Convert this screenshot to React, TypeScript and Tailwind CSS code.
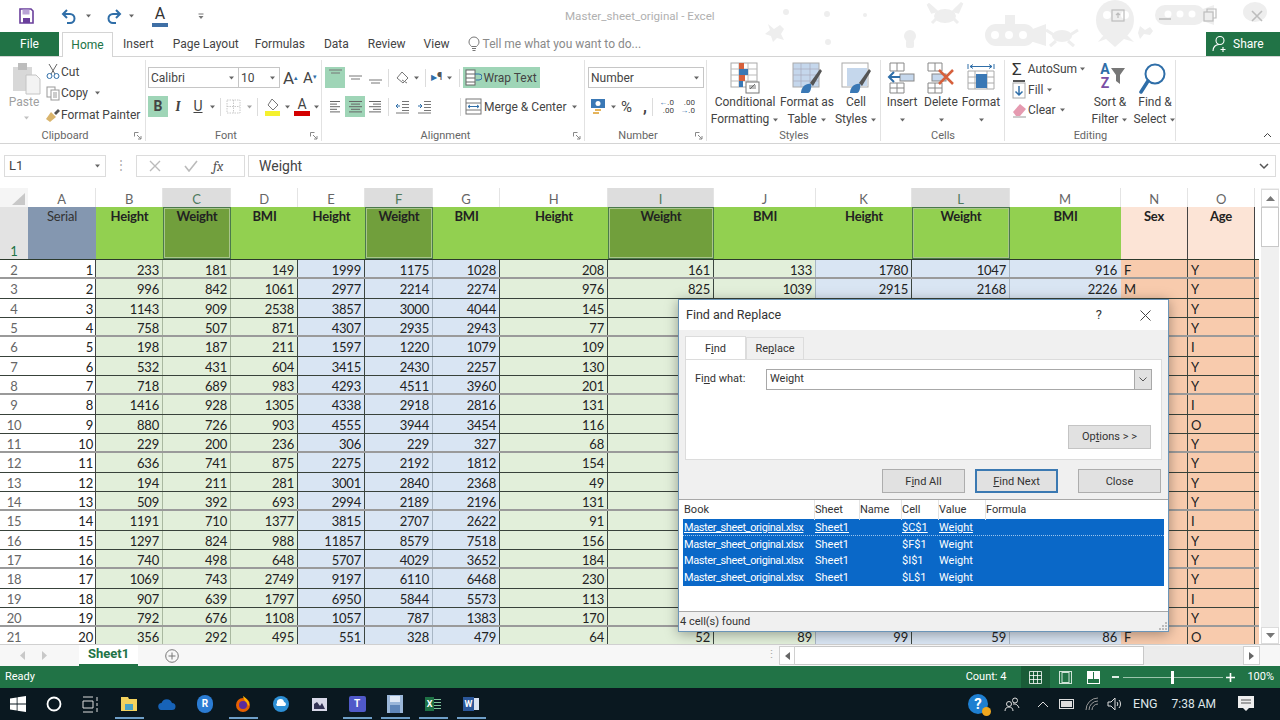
import React from "react";

const ROW = "grid grid-rows-[minmax(0,1fr)] grid-cols-[28px_68px_67px_68px_67px_67px_68px_67px_108px_106px_102px_96px_98px_111px_67px_67px_4px]";
const LETTERS = ["A","B","C","D","E","F","G","H","I","J","K","L","M","N","O"];
const HEAD = ["Serial","Height","Weight","BMI","Height","Weight","BMI","Height","Weight","BMI","Height","Weight","BMI","Sex","Age"];
const DATA: (string)[][] = [
"233,181,149,1999,1175,1028,208,161,133,1780,1047,916,F,Y","996,842,1061,2977,2214,2274,976,825,1039,2915,2168,2226,M,Y",
"1143,909,2538,3857,3000,4044,145,,,,,,,Y","758,507,871,4307,2935,2943,77,,,,,,,Y","198,187,211,1597,1220,1079,109,,,,,,,I",
"532,431,604,3415,2430,2257,130,,,,,,,Y","718,689,983,4293,4511,3960,201,,,,,,,Y","1416,928,1305,4338,2918,2816,131,,,,,,,I",
"880,726,903,4555,3944,3454,116,,,,,,,O","229,200,236,306,229,327,68,,,,,,,Y","636,741,875,2275,2192,1812,154,,,,,,,Y",
"194,211,281,3001,2840,2368,49,,,,,,,Y","509,392,693,2994,2189,2196,131,,,,,,,Y","1191,710,1377,3815,2707,2622,91,,,,,,,I",
"1297,824,988,11857,8579,7518,156,,,,,,,Y","740,498,648,5707,4029,3652,184,,,,,,,Y","1069,743,2749,9197,6110,6468,230,,,,,,,Y",
"907,639,1797,6950,5844,5573,113,,,,,,,I","792,676,1108,1057,787,1383,170,,,,,,,Y","356,292,495,551,328,479,64,52,89,99,59,86,F,O",
].map((s) => s.split(","));

const bodyBg = (c: number) => c <= 2 ? "bg-[#e2efda]" : c <= 5 ? "bg-[#d9e5f3]" : c <= 8 ? "bg-[#e2efda]" : c <= 11 ? "bg-[#d9e5f3]" : "bg-[#f8cbad]";
const bodyLine = (c: number) => (c === 0 || c === 1 ? "border-[#a9b8a0]" : c === 4 || c === 8 || c === 10 ? "border-[#a8b6c4]" : c === 11 ? "border-[#d9e5f3]" : "border-[#3c4640]");

function Caret({ className = "" }: { className?: string }) {
  return <svg width="7" height="4" viewBox="0 0 7 4" className={"inline-block shrink-0 " + className}><path d="M1 0.5h5L3.5 3.5z" fill="#666" /></svg>;
}

function Group({ w, label, launcher, children }: { w: string; label: string; launcher?: boolean; children: React.ReactNode }) {
  return (
    <div className={"relative h-[86px] flex flex-col shrink-0 " + w}>
      <div className="h-[69px] shrink-0 flex">{children}</div>
      <div className={"h-[18px] shrink-0 text-center text-[11px] leading-[20px] text-[#666] " + (launcher ? "pr-[16px]" : "")}>{label}</div>
      <span className="absolute right-0 top-[3px] h-[81px] w-px bg-[#e2e2e2]" />
      {launcher && (
        <svg width="8" height="8" viewBox="0 0 8 8" className="absolute right-[4px] bottom-[3px]"><path d="M0.5 0.5h4M0.5 0.5v4M3 3l4 4M7 4v3H4" stroke="#888" fill="none" /></svg>
      )}
    </div>
  );
}

function Sep() { return <span className="block w-px h-[18px] bg-[#dcdcdc] shrink-0" />; }

function AlignIcon({ kind }: { kind: "l" | "c" | "r" }) {
  const ws = kind === "l" ? [[2,12],[2,9],[2,12],[2,9],[2,12]] : kind === "c" ? [[1,14],[3,12],[1,14],[3,12],[1,14]] : [[1,13],[5,13],[1,13],[5,13],[1,13]];
  return <svg width="15" height="15" viewBox="0 0 15 15">{ws.map((p, i) => <path key={i} d={`M${p[0]} ${2.5 + i * 2.6}H${p[1]}`} stroke="#666" />)}</svg>;
}

function VAlign({ y }: { y: number }) {
  return <svg width="15" height="15" viewBox="0 0 15 15"><path d={`M1 ${y}H14M3 ${y + 3}H12`} stroke="#777" /></svg>;
}

function Large({ w, ml, icon, l1, l2 }: { w: string; ml?: string; icon: React.ReactNode; l1: string; l2?: React.ReactNode }) {
  return (
    <div className={"flex flex-col items-center shrink-0 whitespace-nowrap " + w + " " + (ml || "")}>
      <div className="h-[36px] shrink-0 pt-[5px] flex items-start justify-center">{icon}</div>
      <div className="h-[17px] shrink-0 leading-[17px] mt-[1px]">{l1}</div>
      <div className="h-[17px] shrink-0 leading-[17px] flex items-center gap-[3px]">{l2}</div>
    </div>
  );
}

function TitleBar() {
  return (
    <div className="relative h-[32px] flex items-center">
      <svg width="15" height="16" viewBox="0 0 15 16" className="ml-[19px]"><path d="M1 1h11l2 2v12H1z" fill="none" stroke="#6a3f9c" strokeWidth="1.6" /><rect x="3.5" y="1.5" width="7" height="5" fill="#b9a3d6" /><rect x="4" y="10" width="7" height="5" fill="#6a3f9c" /></svg>
      <svg width="16" height="16" viewBox="0 0 16 16" className="ml-[27px]"><path d="M6 2L2 6l4 4" fill="none" stroke="#2f6ea8" strokeWidth="2" /><path d="M2 6h7a4.5 4.5 0 0 1 0 9H6" fill="none" stroke="#2f6ea8" strokeWidth="2" /></svg>
      <Caret className="ml-[8px]" />
      <svg width="16" height="16" viewBox="0 0 16 16" className="ml-[14px]"><path d="M10 2l4 4-4 4" fill="none" stroke="#2f6ea8" strokeWidth="2" /><path d="M14 6H7a4.5 4.5 0 0 0 0 9h3" fill="none" stroke="#2f6ea8" strokeWidth="2" /></svg>
      <Caret className="ml-[6px]" />
      <div className="ml-[17px] w-[16px] h-[22px] flex flex-col items-center text-[16px] leading-[18px] text-[#333]"><span>A</span><span className="w-[16px] h-[4px] bg-[#3f6fa5]" /></div>
      <svg width="6" height="7" viewBox="0 0 6 7" className="ml-[30px]"><path d="M0.5 1h5" stroke="#777" /><path d="M0.5 3h5L3 6z" fill="#777" /></svg>
      <div className="ml-[361px] mt-[1px] text-[11.6px] text-[#b0b0b0]">Master_sheet_original - Excel</div>
      <svg width="540" height="56" viewBox="0 0 540 56" className="absolute left-[740px] top-0" fill="#eeeeee">
        <path d="M28 24l6 5 6-4 4 4-3 5 3 6-7-2-4 4-2-6-6-2 5-4z" />
        <circle cx="46" cy="12" r="3" /><circle cx="87" cy="14" r="3" /><circle cx="125" cy="15" r="2" /><circle cx="88" cy="42" r="3" />
        <g><circle cx="170" cy="36" r="6" /><rect x="166" y="40" width="8" height="8" rx="2" /></g>
        <ellipse cx="205" cy="16" rx="11" ry="7" /><path d="M188 4l8 7-4 1zM222 3l-8 8 4 1zM192 23l6-6M218 23l-6-6" stroke="#eeeeee" strokeWidth="3" />
        <rect x="245" y="24" width="50" height="22" rx="11" /><rect x="265" y="15" width="10" height="12" /><path d="M290 30l16-6v22l-16-5z" />
        <circle cx="255" cy="35" r="4" fill="#fff" /><circle cx="269" cy="35" r="4" fill="#fff" /><circle cx="283" cy="35" r="4" fill="#fff" />
        <ellipse cx="322" cy="36" rx="10" ry="6" /><path d="M306 30l8 5M338 30l-8 5M310 46l6-5M334 46l-6-5" stroke="#eeeeee" strokeWidth="3" />
        <ellipse cx="375" cy="20" rx="19" ry="20" /><path d="M358 42l10-12 7 6 7-6 12 12-10-3-9 8-9-8z" />
        <circle cx="367" cy="15" r="4" fill="#fff" /><circle cx="385" cy="15" r="4" fill="#fff" />
        <rect x="415" y="5" width="50" height="20" rx="10" /><path d="M460 10l14-5v20l-14-5z" />
        <circle cx="428" cy="14" r="3.5" fill="#fff" /><circle cx="440" cy="14" r="3.5" fill="#fff" /><circle cx="452" cy="14" r="3.5" fill="#fff" />
        <path d="M400 26l5 4 5-3 3 4-3 4-6-1-4 5-2-6z" />
        <ellipse cx="515" cy="12" rx="12" ry="10" /><circle cx="490" cy="36" r="4" /><circle cx="525" cy="42" r="9" />
      </svg>
      <svg width="160" height="20" viewBox="0 0 160 20" className="absolute left-[1108px] top-[6px]" fill="none" stroke="#bdbdbd" strokeWidth="1.2">
        <rect x="4" y="4" width="12" height="11" /><path d="M10 12V7M8 9l2-2 2 2" />
        <path d="M51 13h12" strokeWidth="1.6" />
        <rect x="96" y="6" width="9" height="9" /><path d="M99 6V3h9v9h-3" />
        <path d="M144 5l10 10M154 5l-10 10" strokeWidth="1.6" />
      </svg>
    </div>
  );
}

function TabsRow() {
  const tabs = [["Insert", "ml-[10px]"], ["Page Layout", "ml-[19px]"], ["Formulas", "ml-[16px]"], ["Data", "ml-[19px]"], ["Review", "ml-[19px]"], ["View", "ml-[18px]"]];
  return (
    <div className="relative z-10 h-[24px] flex items-center text-[12px] text-[#444]">
      <div className="w-[59px] h-[24px] bg-[#217346] text-white text-center leading-[24px]">File</div>
      <div className="ml-[3px] w-[51px] h-[25px] -mb-px bg-white border border-b-0 border-[#d4d4d4] text-[#217346] text-center leading-[24px]">Home</div>
      {tabs.map(([t, m]) => <div key={t} className={m}>{t}</div>)}
      <svg width="12" height="16" viewBox="0 0 12 16" className="ml-[18px]" fill="none" stroke="#777"><path d="M3.5 10.5C2 9 1 7.8 1 6a5 5 0 0 1 10 0c0 1.8-1 3-2.500 4.500zM4 12.500h4M4.500 14.500h3" /></svg>
      <div className="ml-[3px] text-[#8a8a8a] whitespace-nowrap">Tell me what you want to do...</div>
      <div className="absolute right-0 top-0 w-[74px] h-[24px] bg-[#217346] text-white flex items-center">
        <svg width="16" height="18" viewBox="0 0 16 18" className="ml-[6px]" fill="none" stroke="#fff" strokeWidth="1.1"><circle cx="8" cy="5.500" r="4" /><path d="M1 16c0-4 2.500-6.500 6-6.500M11 12v5M8.500 14.500h5" /></svg>
        <span className="ml-[5px]">Share</span>
      </div>
    </div>
  );
}

function Clipboard() {
  return (
    <Group w="w-[146px]" label="Clipboard" launcher>
      <div className="w-[44px] pl-[8px] flex flex-col items-center text-[#a0a0a0]">
        <svg width="30" height="33" viewBox="0 0 30 33" className="mt-[5px] shrink-0"><rect x="2" y="5" width="19" height="24" fill="#d8d8d8" /><rect x="7" y="1" width="9" height="7" fill="#bdbdbd" /><path d="M15 13h10l4 4v15H15z" fill="#f3f3f3" stroke="#c4c4c4" /></svg>
        <div className="mt-[-1px] h-[17px] leading-[17px] text-[12px] ml-[-4px] w-[44px] text-center">Paste</div>
        <Caret className="mt-[5px] opacity-40" />
      </div>
      <div className="flex flex-col mt-[4px]">
        {[["Cut", 0], ["Copy", 1], ["Format Painter", 2]].map(([t, i]) => (
          <div key={t as string} className="h-[21.500px] flex items-center whitespace-nowrap text-[12px] text-[#444]">
            <span className="w-[17px] flex justify-center">
              {i === 0 && <svg width="14" height="17" viewBox="0 0 14 17" fill="none" stroke="#2f6ea8"><path d="M3 1l6 10M11 1L5 11" stroke="#666" /><circle cx="3.500" cy="13" r="2.500" /><circle cx="10.500" cy="13" r="2.500" /></svg>}
              {i === 1 && <svg width="14" height="15" viewBox="0 0 14 15" fill="#fff" stroke="#999"><rect x="1" y="1" width="8" height="10" /><rect x="5" y="4" width="8" height="10" /><path d="M7 7h4M7 9h4M7 11h4" /></svg>}
              {i === 2 && <svg width="16" height="16" viewBox="0 0 16 16"><path d="M1 12l5-7 5 5-6 5z" fill="#d9b46c" /><path d="M9 6l4-4 2 2-4 4z" fill="#555" /></svg>}
            </span>
            {t}
            {i === 1 && <Caret className="ml-[6px]" />}
          </div>
        ))}
      </div>
    </Group>
  );
}

function Font() {
  return (
    <Group w="w-[176px]" label="Font" launcher>
      <div className="pl-[2px] pt-[10px] flex flex-col gap-[8px] text-[12px] text-[#444]">
        <div className="flex items-center h-[21px]">
          <div className="w-[91px] h-[21px] border border-[#c6c6c6] flex items-center justify-between px-[2px]"><span>Calibri</span><Caret className="mr-[1px]" /></div>
          <div className="w-[41px] h-[21px] border border-l-0 border-[#c6c6c6] flex items-center justify-between px-[2px]"><span>10</span><Caret className="mr-[1px]" /></div>
          <span className="ml-[3px] text-[17px] w-[20px] leading-[16px]">A<sup className="text-[7px] text-[#2f6ea8]">▴</sup></span>
          <span className="text-[15px] w-[20px] leading-[16px]">A<sup className="text-[7px] text-[#2f6ea8]">▾</sup></span>
        </div>
        <div className="flex items-center h-[21px]">
          <span className="w-[20px] h-[21px] bg-[#9fd5b7] text-center font-bold text-[14px] leading-[21px]">B</span>
          <span className="w-[20px] text-center italic font-bold text-[14px] font-serif">I</span>
          <span className="w-[20px] text-center underline text-[14px]">U</span>
          <Caret className="ml-[1px]" />
          <span className="ml-[4px]"><Sep /></span>
          <svg width="15" height="15" viewBox="0 0 15 15" fill="none" stroke="#c8c8c8" className="ml-[5px]"><path d="M1 1h13v13H1zM1 7.500h13M7.500 1v13" strokeDasharray="1.500 1" /></svg>
          <Caret className="ml-[5px] opacity-60" />
          <span className="ml-[4px]"><Sep /></span>
          <svg width="17" height="18" viewBox="0 0 17 18" className="ml-[6px]"><path d="M8 1l6 6-5 5-5-5z" fill="none" stroke="#777" /><rect x="1" y="13" width="15" height="5" fill="#f5f12e" /></svg>
          <Caret className="ml-[3px]" />
          <div className="ml-[3px] w-[16px] h-[19px] flex flex-col items-center text-[14px] leading-[14px]"><span>A</span><span className="w-[16px] h-[5px] bg-[#d40000]" /></div>
          <Caret className="ml-[3px]" />
        </div>
      </div>
    </Group>
  );
}

function Alignment() {
  return (
    <Group w="w-[263px]" label="Alignment" launcher>
      <div className="pl-[3px] pt-[10px] flex flex-col gap-[8px] text-[12px] text-[#444]">
        <div className="flex items-center h-[21px]">
          <span className="w-[20px] h-[21px] bg-[#9fd5b7] flex justify-center pt-[1px]"><VAlign y={2} /></span>
          <span className="w-[20px] ml-0 flex justify-center"><VAlign y={6} /></span>
          <span className="w-[20px] flex justify-center"><VAlign y={10} /></span>
          <span className="ml-[3px]"><Sep /></span>
          <svg width="15" height="15" viewBox="0 0 15 15" className="ml-[6px]" fill="none" stroke="#777"><path d="M2 8l5-6 6 6-5 5zM7 10l5 3" /></svg>
          <Caret className="ml-[3px]" />
          <span className="ml-[5px]"><Sep /></span>
          <span className="ml-[5px] text-[11px] leading-[14px] text-[#555]"><span className="text-[#2f6ea8] text-[8px]">▶</span>¶</span>
          <Caret className="ml-[4px]" />
          <span className="ml-[6px]"><Sep /></span>
          <div className="ml-[3px] w-[77px] h-[21px] bg-[#9fd5b7] flex items-center">
            <svg width="17" height="17" viewBox="0 0 17 17" className="ml-[2px]" fill="#fff" stroke="#666"><rect x="1" y="1" width="9" height="15" /><path d="M1 5h9M1 9h9M1 13h9" /><path d="M10 5h4a2 2 0 0 1 0 6h-3" fill="none" stroke="#2f6ea8" /></svg>
            <span className="ml-[1px] whitespace-nowrap">Wrap Text</span>
          </div>
        </div>
        <div className="flex items-center h-[21px]">
          <span className="w-[20px] flex justify-center"><AlignIcon kind="l" /></span>
          <span className="w-[20px] h-[21px] bg-[#9fd5b7] flex items-center justify-center"><AlignIcon kind="c" /></span>
          <span className="w-[20px] flex justify-center"><AlignIcon kind="r" /></span>
          <span className="ml-[3px]"><Sep /></span>
          <svg width="15" height="15" viewBox="0 0 15 15" className="ml-[6px]" fill="none" stroke="#777"><path d="M7 2.500h7M7 5.500h7M7 8.500h7M7 11.500h7M1 14h13" /><path d="M5 7H1M3 5L1 7l2 2" stroke="#2f6ea8" /></svg>
          <svg width="15" height="15" viewBox="0 0 15 15" className="ml-[7px]" fill="none" stroke="#777"><path d="M7 2.500h7M7 5.500h7M7 8.500h7M7 11.500h7M1 14h13" /><path d="M1 7h4M3 5l2 2-2 2" stroke="#2f6ea8" /></svg>
          <span className="ml-[28px]"><Sep /></span>
          <svg width="17" height="17" viewBox="0 0 17 17" className="ml-[4px]" fill="none" stroke="#777"><rect x="1" y="1" width="15" height="15" /><path d="M1 5h15M1 12h15" /><path d="M3 8.500h11M3 8.500l2-1.500M3 8.500l2 1.500M14 8.500l-2-1.500M14 8.500l-2 1.500" stroke="#2f6ea8" /></svg>
          <span className="ml-[2px] whitespace-nowrap">Merge &amp; Center</span>
          <Caret className="ml-[5px]" />
        </div>
      </div>
    </Group>
  );
}

function NumberG() {
  return (
    <Group w="w-[122px]" label="Number" launcher>
      <div className="pl-[3px] pt-[10px] flex flex-col gap-[8px] text-[12px] text-[#444]">
        <div className="w-[116px] h-[21px] border border-[#c6c6c6] flex items-center justify-between px-[2px]"><span>Number</span><Caret className="mr-[1px]" /></div>
        <div className="flex items-center h-[21px]">
          <svg width="16" height="17" viewBox="0 0 16 17" className="ml-[2px]"><rect x="1" y="1" width="14" height="9" fill="#3a78b5" /><circle cx="8" cy="5.500" r="2.500" fill="#fff" /><rect x="5" y="11" width="6" height="2" fill="#e5b45c" /><rect x="3" y="14" width="6" height="2" fill="#e5b45c" /></svg>
          <Caret className="ml-[4px]" />
          <span className="ml-[4px] text-[15px] leading-[16px]">%</span>
          <span className="ml-[11px] font-bold text-[16px] leading-[12px]">,</span>
          <span className="ml-[5px]"><Sep /></span>
          <div className="ml-[4px] w-[17px] text-[8px] leading-[8px] text-right"><span className="text-[#2f6ea8]">←</span>.0<br />.00</div>
          <div className="ml-[4px] w-[17px] text-[8px] leading-[8px] text-right">.00<br /><span className="text-[#2f6ea8]">→</span>.0</div>
        </div>
      </div>
    </Group>
  );
}

function Styles() {
  return (
    <Group w="w-[174px]" label="Styles">
      <div className="flex text-[12px] text-[#444]">
        <Large ml="ml-[3px]" w="w-[70px]" l1="Conditional" l2={<>Formatting <Caret /></>} icon={
          <svg width="30" height="32" viewBox="0 0 30 32"><rect x="1" y="1" width="26" height="24" fill="#fff" stroke="#aaa" /><path d="M9 1v24M18 1v24M1 7h26M1 13h26M1 19h26" stroke="#bbb" /><rect x="9" y="1" width="5" height="6" fill="#d6603c" /><rect x="9" y="7" width="9" height="6" fill="#3a78b5" /><rect x="9" y="13" width="6" height="6" fill="#d6603c" /><rect x="9" y="19" width="4" height="6" fill="#3a78b5" /><rect x="16" y="20" width="13" height="11" fill="#fff" stroke="#777" /><path d="M20 27l5-5M19 24h7M19 26h7" stroke="#555" strokeWidth=".8" /></svg>} />
        <Large w="w-[54px]" l1="Format as" l2={<>Table <Caret /></>} icon={
          <svg width="32" height="32" viewBox="0 0 32 32"><rect x="2" y="1" width="26" height="24" fill="#c5d7ec" stroke="#aaa" /><path d="M2 7h26M2 13h26M2 19h26M10 1v24M19 1v24" stroke="#aab" strokeWidth=".7" /><path d="M22 24l9-15-2-2-10 14z" fill="#555" /><path d="M10 31c0-6 5-10 10-9 1 4-1 9-3 9z" fill="#3a78b5" /></svg>} />
        <Large w="w-[44px]" l1="Cell" l2={<>Styles <Caret /></>} icon={
          <svg width="32" height="32" viewBox="0 0 32 32"><rect x="2" y="1" width="26" height="24" fill="#fff" stroke="#aaa" /><rect x="7" y="6" width="20" height="18" fill="#c5d7ec" /><path d="M22 24l9-15-2-2-10 14z" fill="#555" /><path d="M10 31c0-6 5-10 10-9 1 4-1 9-3 9z" fill="#3a78b5" /></svg>} />
      </div>
    </Group>
  );
}

function Cells() {
  return (
    <Group w="w-[124px]" label="Cells">
      <div className="flex text-[12px] text-[#444]">
        <Large ml="ml-[3px]" w="w-[36px]" l1="Insert" l2={<Caret />} icon={
          <svg width="30" height="32" viewBox="0 0 30 32" fill="none"><path d="M3 1h14v8H3zM10 1v8M3 21h14v10H3zM3 26h14M10 21v10" stroke="#888" /><rect x="13" y="12" width="14" height="7" fill="#c5d7ec" stroke="#888" /><path d="M13 15H2M7 10l-5 5 5 5" stroke="#2f6ea8" strokeWidth="2" /></svg>} />
        <Large w="w-[42px]" l1="Delete" l2={<Caret />} icon={
          <svg width="32" height="32" viewBox="0 0 32 32" fill="none"><path d="M3 1h14v8H3zM10 1v8M3 21h14v10H3zM3 26h14M10 21v10" stroke="#888" /><rect x="7" y="12" width="14" height="7" fill="#c5d7ec" stroke="#888" /><path d="M14 8l14 14M28 8L14 22" stroke="#d6603c" strokeWidth="2.500" /></svg>} />
        <Large w="w-[38px]" l1="Format" l2={<Caret />} icon={
          <svg width="30" height="32" viewBox="0 0 30 32" fill="none"><path d="M2 2v5M28 2v5M4 4.500h22M4 4.500l3-2M4 4.500l3 2M26 4.500l-3-2M26 4.500l-3 2" stroke="#2f6ea8" /><path d="M2 9h26v18H2zM2 15h26M2 21h26M9 9v18M21 9v18" stroke="#aaa" /><rect x="10" y="12" width="11" height="14" fill="#3a78b5" /></svg>} />
      </div>
    </Group>
  );
}

function Editing() {
  return (
    <Group w="w-[171px]" label="Editing">
      <div className="flex text-[12px] text-[#444]">
        <div className="ml-[7px] w-[74px] mt-[2px] flex flex-col whitespace-nowrap">
          <div className="h-[20.500px] flex items-center"><span className="w-[17px] text-[17px] leading-[17px] text-[#333]">Σ</span><span className="ml-[6px] mr-[-4px]">AutoSum</span><Caret className="ml-[6px]" /></div>
          <div className="h-[20.500px] flex items-center">
            <svg width="14" height="19" viewBox="0 0 14 19" fill="none"><path d="M1 1h12" stroke="#555" strokeWidth="2" /><rect x="1" y="3" width="12" height="15" stroke="#aaa" /><path d="M7 6v9M3.500 11.500L7 15l3.500-3.500" stroke="#2f6ea8" strokeWidth="1.500" /></svg>
            <span className="ml-[2px]">Fill</span><Caret className="ml-[3px]" />
          </div>
          <div className="h-[20.500px] flex items-center">
            <svg width="15" height="16" viewBox="0 0 15 16"><path d="M1 10l7-8 6 5-6 7H4z" fill="#e59ab0" /><path d="M1 15h13" stroke="#999" /></svg>
            <span className="ml-[1px]">Clear</span><Caret className="ml-[3px]" />
          </div>
        </div>
        <Large ml="ml-[2px]" w="w-[44px]" l1="Sort &" l2={<>Filter <Caret /></>} icon={
          <div className="flex items-start text-[14px] leading-[14px] font-bold ml-[6px]"><div className="flex flex-col items-center"><span className="text-[#2f6ea8]">A</span><span className="text-[#7a4fa5]">Z</span></div><svg width="16" height="18" viewBox="0 0 16 18" className="mt-[5px]"><path d="M1 1h14l-5 7v9l-4-3V8z" fill="#777" /></svg></div>} />
        <Large w="w-[46px]" l1="Find &" l2={<>Select <Caret /></>} icon={
          <svg width="28" height="32" viewBox="0 0 28 32" fill="none" className="mr-[6px]"><circle cx="17" cy="12" r="9.500" stroke="#2f6ea8" strokeWidth="2" /><path d="M10 19L3 30" stroke="#2f6ea8" strokeWidth="3.500" strokeLinecap="round" /></svg>} />
      </div>
    </Group>
  );
}

function Ribbon() {
  return (
    <div className="relative h-[88px] flex border-t border-b border-[#d4d4d4]">
      <Clipboard /><Font /><Alignment /><NumberG /><Styles /><Cells /><Editing />
      <svg width="9" height="6" viewBox="0 0 9 6" className="absolute right-[8px] top-[75px]" fill="none" stroke="#444"><path d="M1 5l3.500-3.500L8 5" /></svg>
    </div>
  );
}

function FormulaBar() {
  return (
    <div className="h-[44px] flex items-start pt-[11px] text-[#444]">
      <div className="ml-[4px] w-[102px] h-[22px] border border-[#dcdcdc] flex items-center justify-between px-[4px] text-[13px]"><span>L1</span><Caret /></div>
      <div className="w-[30px] flex justify-center text-[#aaa] text-[12px] leading-[20px]">⋮</div>
      <div className="w-[109px] h-[22px] border border-[#dcdcdc] flex items-center">
        <svg width="12" height="12" viewBox="0 0 12 12" className="ml-[12px]" fill="none" stroke="#bbb" strokeWidth="1.400"><path d="M1 1l10 10M11 1L1 11" /></svg>
        <svg width="14" height="12" viewBox="0 0 14 12" className="ml-[23px]" fill="none" stroke="#bbb" strokeWidth="1.600"><path d="M1 6l4 5 8-10" /></svg>
        <span className="ml-[15px] font-serif italic text-[14px] text-[#555]">fx</span>
      </div>
      <div className="ml-[3px] flex-1 mr-[4px] h-[22px] border border-[#dcdcdc] flex items-center justify-between pl-[10px] pr-[6px] text-[14px]">
        <span>Weight</span>
        <svg width="10" height="7" viewBox="0 0 10 7" fill="none" stroke="#555" strokeWidth="1.500"><path d="M1 1l4 4 4-4" /></svg>
      </div>
    </div>
  );
}

function Grid() {
  const selected = [2, 5, 8, 11];
  return (
    <div className="h-[456px] flex overflow-hidden">
      <div className="w-[1259px] shrink-0 font-['Lato',sans-serif] text-[13px] text-[#222] tracking-[-0.2px]">
        <div className={ROW + " h-[19px] text-[#666]"}>
          <div className="relative bg-[#f5f5f5]"><svg width="28" height="19" viewBox="0 0 28 19" className="absolute inset-0"><path d="M25 5v12H12z" fill="#c8c8c8" /></svg></div>
          {LETTERS.map((l, i) => (
            <div key={l} className={"text-center leading-[23px] border-r border-[#e4e4e4] " + (selected.includes(i) ? "bg-[#dddddd] text-[#4f7a5e]" : "bg-white")}>{l}</div>
          ))}
        </div>
        <div className={ROW + " h-[53px] border-b border-[#2c3a2c]"}>
          <div className="bg-[#e3e3e3] text-[#217346] text-center pt-[35px]">1</div>
          {HEAD.map((h, i) => {
            const isSel = selected.includes(i);
            const bg = i === 0 ? "bg-[#8497b0] text-[#333] font-normal" : i >= 13 ? "bg-[#fce4d6] font-bold" : isSel && i !== 11 ? "bg-[#719f3c] font-bold" : "bg-[#92d050] font-bold";
            return <div key={i} className={"text-center leading-[15px] " + bg + (isSel ? " border-2 border-[#4b7a4b] outline outline-1 outline-[#a9c58b] -outline-offset-2" : i >= 13 ? " border-r border-[#444] pt-[2px]" : " pt-[2px]")}>{h}</div>;
          })}
        </div>
        {DATA.map((r, ri) => (
          <div key={ri} className={ROW + " h-[19.33px] " + (ri % 3 === 0 ? "border-b-2 border-[#9a9a9a]" : "border-b border-[#38423a]")}>
            <div className="bg-white text-center text-[#666] leading-[20px]">{ri + 2}</div>
            <div className="bg-white text-right pr-[2px] leading-[20px] border-r border-[#444]">{ri + 1}</div>
            {r.map((v, c) => (
              <div key={c} className={bodyBg(c) + " leading-[20px] border-r " + bodyLine(c) + " " + (c >= 12 ? "text-left pl-[3px] " : "text-right pr-[3px] ")}>{v}</div>
            ))}
            <div className="bg-[#f8cbad]" />
          </div>
        ))}
      </div>
      <div className="ml-[2px] w-[18px] h-full bg-[#f0f0f0] flex flex-col">
        <div className="h-[18px] mt-[1px] bg-white border border-[#dcdcdc] flex items-center justify-center"><svg width="9" height="5" viewBox="0 0 9 5"><path d="M0 5h9L4.500 0z" fill="#777" /></svg></div>
        <div className="h-[40px] bg-white border border-[#c8c8c8]" />
        <div className="flex-1" />
        <div className="h-[17px] bg-white border border-[#dcdcdc] flex items-center justify-center"><svg width="9" height="5" viewBox="0 0 9 5"><path d="M0 0h9L4.500 5z" fill="#777" /></svg></div>
      </div>
    </div>
  );
}

function SheetBar() {
  return (
    <div className="h-[22px] flex items-center bg-[#f7f7f7] border-t border-[#d0d0d0] text-[12.5px]">
      <svg width="6" height="9" viewBox="0 0 6 9" className="ml-[20px]"><path d="M5 0v9L0 4.500z" fill="#c8c8c8" /></svg>
      <svg width="6" height="9" viewBox="0 0 6 9" className="ml-[16px]"><path d="M0 0v9l5-4.500z" fill="#c8c8c8" /></svg>
      <div className="ml-[31px] w-[59px] h-[21px] bg-white border-b-2 border-[#217346] text-[#217346] font-bold text-center leading-[18px] text-[13px]">Sheet1</div>
      <svg width="14" height="14" viewBox="0 0 14 14" className="ml-[27px]" fill="none" stroke="#777"><circle cx="7" cy="7" r="6.300" /><path d="M7 3.500v7M3.500 7h7" /></svg>
      <div className="ml-[587px] text-[#aaa] text-[11px] w-[6px]">⋮</div>
      <div className="ml-[7px] w-[16px] h-[19px] bg-white border border-[#d0d0d0] flex items-center justify-center"><svg width="5" height="8" viewBox="0 0 5 8"><path d="M5 0v8L0 4z" fill="#666" /></svg></div>
      <div className="w-[349px] h-[19px] bg-white border border-l-0 border-[#c8c8c8]" />
      <div className="w-[99px] h-[19px] bg-[#ececec]" />
      <div className="w-[17px] h-[19px] bg-white border border-[#d0d0d0] flex items-center justify-center"><svg width="5" height="8" viewBox="0 0 5 8"><path d="M0 0v8l5-4z" fill="#666" /></svg></div>
    </div>
  );
}

function StatusBar() {
  return (
    <div className="h-[22px] bg-[#217346] text-white text-[11px] flex items-center">
      <span className="ml-[5px]">Ready</span>
      <span className="ml-auto">Count: 4</span>
      <div className="ml-[15px] w-[29px] h-[22px] bg-[#1a5c38] flex items-center justify-center">
        <svg width="13" height="13" viewBox="0 0 13 13" fill="none" stroke="#fff" strokeWidth=".8"><path d="M.5.500h12v12H.5zM4.500.500v12M8.500.500v12M.5 4.500h12M.5 8.500h12" /></svg>
      </div>
      <svg width="13" height="13" viewBox="0 0 13 13" className="ml-[9px]" fill="none" stroke="#cfe3d7"><rect x=".5" y=".5" width="12" height="12" /><rect x="3" y="1.500" width="7" height="10" /></svg>
      <svg width="13" height="13" viewBox="0 0 13 13" className="ml-[15px]"><rect x=".5" y=".5" width="12" height="12" fill="none" stroke="#fff" /><rect x="1" y="1" width="5" height="7" fill="#fff" /><rect x="7" y="1" width="5" height="7" fill="#fff" /></svg>
      <span className="ml-[12px] w-[7px] h-[2px] bg-[#dfeee5]" />
      <div className="ml-[4px] w-[100px] h-[1px] bg-[#9cc4ac] relative"><span className="absolute left-[48px] top-[-6px] w-[3px] h-[13px] bg-white" /></div>
      <svg width="9" height="9" viewBox="0 0 9 9" className="ml-[3px]"><path d="M4.500 0v9M0 4.500h9" stroke="#fff" strokeWidth="1.600" /></svg>
      <span className="ml-[12px] mr-[6px]">100%</span>
    </div>
  );
}

function Taskbar() {
  const Item = ({ children, on, cls = "w-[38px]" }: { children: React.ReactNode; on?: boolean; cls?: string }) => (
    <div className={"relative h-[32px] flex items-center justify-center " + cls}>
      {children}
      {on && <span className="absolute left-[5px] bottom-[1px] w-[29px] h-[2px] bg-[#6f9fc8]" />}
    </div>
  );
  return (
    <div className="h-[32px] bg-[#0a1820] text-[#dfe6ea] flex items-center text-[13px]">
      <Item cls="w-[36px]"><svg width="16" height="16" viewBox="0 0 16 16" fill="#fff"><path d="M0 2.500l6.700-1v6H0zM7.500 1.300L16 0v7.500H7.500zM0 8.500h6.700v6l-6.700-1zM7.500 8.500H16V16l-8.500-1.200z" /></svg></Item>
      <Item cls="w-[36px]"><svg width="16" height="16" viewBox="0 0 16 16" fill="none" stroke="#fff" strokeWidth="1.800"><circle cx="8" cy="8" r="6.500" /></svg></Item>
      <Item cls="w-[36px]"><svg width="17" height="17" viewBox="0 0 17 17" fill="none" stroke="#ddd"><path d="M1 1h10M1 16h10M1 5h10v7H1zM15 1v4M15 7v3M15 12v4" /></svg></Item>
      <Item on cls="w-[38px] ml-[2px]"><svg width="16" height="14" viewBox="0 0 16 14"><path d="M0 0h7l1 2h8v12H0z" fill="#f4d35e" /><rect x="4" y="7" width="8" height="6" fill="#4aa3c7" /></svg></Item>
      <Item><svg width="18" height="11" viewBox="0 0 18 11"><path d="M4 11a3.500 3.500 0 0 1-.5-7A5.500 5.500 0 0 1 14 4a3.500 3.500 0 0 1 0 7z" fill="#1763b8" /></svg></Item>
      <Item><div className="w-[16px] h-[18px] rounded-full bg-[#2b7cd3] text-white text-[10px] font-bold text-center leading-[18px]">R</div></Item>
      <Item on><svg width="16" height="16" viewBox="0 0 16 16"><circle cx="8" cy="9" r="7" fill="#e66000" /><path d="M8 0c3 2 7 5 6 10-3-4-5-5-6-10z" fill="#ffb000" /><circle cx="8" cy="9" r="4" fill="#5b2a9d" /></svg></Item>
      <Item><svg width="16" height="16" viewBox="0 0 16 16"><circle cx="8" cy="8" r="8" fill="#2d8fd5" /><path d="M4 10a2 2 0 0 1 0-3 3.500 3.500 0 0 1 7-1 2.200 2.200 0 0 1 1 4z" fill="#fff" /></svg></Item>
      <Item><svg width="15" height="13" viewBox="0 0 15 13"><rect width="15" height="13" fill="#d8d8e8" /><path d="M2 11V6l3-2 3 4 2-3 3 6z" fill="#333355" /></svg></Item>
      <Item on><div className="w-[17px] h-[16px] rounded-[2px] bg-[#5059c9] text-white text-[10px] font-bold text-center leading-[16px]">T</div></Item>
      <Item on><svg width="16" height="18" viewBox="0 0 16 18"><rect width="16" height="18" fill="#9bb7d9" /><rect x="3" y="1" width="10" height="6" fill="#dfe9f5" /><rect x="3" y="10" width="10" height="8" fill="#5f86b8" /></svg></Item>
      <Item on><div className="flex items-center"><span className="w-[9px] h-[14px] bg-[#1e7145] text-white text-[9px] font-bold text-center leading-[14px]">X</span><svg width="7" height="12" viewBox="0 0 7 12" fill="none" stroke="#7fc79d"><path d="M0 1.500h7M0 4.500h7M0 7.500h7M0 10.500h7" /></svg></div></Item>
      <Item on><div className="flex items-center"><span className="w-[11px] h-[14px] bg-[#2b579a] text-white text-[9px] font-bold text-center leading-[14px]">W</span><span className="w-[5px] h-[12px] bg-[#d9e3f2]" /></div></Item>
      <div className="ml-auto flex items-center">
        <div className="relative w-[20px] h-[20px] rounded-full bg-[#1e7fd1] text-white text-[15px] font-bold text-center leading-[20px]">?<span className="absolute right-[-3px] bottom-[-2px] w-[9px] h-[9px] rounded-full bg-[#f0a81e]" /></div>
        <svg width="16" height="15" viewBox="0 0 16 15" className="ml-[16px]" fill="none" stroke="#ddd"><circle cx="5" cy="7" r="2.500" /><path d="M1 14c0-3 2-4 4-4s4 1 4 4" /><circle cx="11" cy="3.500" r="2.500" /><path d="M9 7c3-.5 5 1 6 4" /></svg>
        <svg width="12" height="7" viewBox="0 0 12 7" className="ml-[17px]" fill="none" stroke="#ddd"><path d="M1 6l5-5 5 5" /></svg>
        <svg width="15" height="10" viewBox="0 0 15 10" className="ml-[10px]"><rect x=".5" y=".5" width="14" height="9" fill="#0b1820" stroke="#ddd" /><rect x="2" y="2" width="11" height="6" fill="#ddd" /></svg>
        <svg width="14" height="14" viewBox="0 0 14 14" className="ml-[11px]" fill="none" stroke="#999"><path d="M1 13A12 12 0 0 1 13 1M4 13a9 9 0 0 1 9-9M7 13a6 6 0 0 1 6-6" /></svg>
        <svg width="14" height="14" viewBox="0 0 14 14" className="ml-[8px]" fill="none" stroke="#ddd"><path d="M1 5h3l4-4v12L4 9H1zM10 5c1 1 1 3 0 4M12 3c2 2 2 6 0 8" /></svg>
        <span className="ml-[12px] text-[12.500px]">ENG</span>
        <span className="ml-[14px] text-[12px]">7:38 AM</span>
        <svg width="16" height="16" viewBox="0 0 16 16" className="ml-[22px] mr-[26px]"><path d="M0 0h16v12h-5l-3 3-3-3H0z" fill="#eee" /><path d="M3 4h10M3 7h10" stroke="#555" /></svg>
      </div>
    </div>
  );
}

function Dialog() {
  const btn = "h-[24px] bg-[#e1e1e1] border border-[#adadad] text-center text-[11px] leading-[23px] text-[#333]";
  const cols = "grid grid-cols-[131px_45px_42px_37px_47px_1fr]";
  const rows = [["$C$1", true], ["$F$1", false], ["$I$1", false], ["$L$1", false]] as const;
  return (
    <div className="absolute left-[678px] top-[299px] w-[491px] h-[333px] z-20 bg-[#f0f0f0] border border-[#6b95b8] shadow-[0_2px_12px_rgba(0,0,0,0.35)] flex flex-col text-[11px] text-[#333]">
      <div className="h-[30px] shrink-0 bg-white flex items-center pl-[7px] text-[12.500px]">
        <span>Find and Replace</span>
        <span className="ml-auto text-[13px]">?</span>
        <svg width="11" height="11" viewBox="0 0 11 11" className="ml-[38px] mr-[17px]" fill="none" stroke="#444"><path d="M.5.500l10 10M10.500.500l-10 10" /></svg>
      </div>
      <div className="pl-[6px] pt-[6px] flex h-[29px] shrink-0 items-end">
        <div className="w-[61px] h-[23px] bg-white border border-b-0 border-[#dcdcdc] text-center leading-[23px]">F<span className="underline">i</span>nd</div>
        <div className="w-[58px] h-[22px] border border-b-0 border-[#dcdcdc] text-center leading-[22px]">Re<span className="underline">p</span>lace</div>
      </div>
      <div className="mx-[6px] h-[101px] shrink-0 bg-white border border-[#dcdcdc] flex flex-col">
        <div className="flex items-center mt-[9px] h-[21px]">
          <span className="ml-[9px] w-[71px]">Fi<span className="underline">n</span>d what:</span>
          <div className="w-[386px] h-[21px] border border-[#a8a8a8] flex items-center justify-between pl-[3px]">
            <span>Weight</span>
            <span className="w-[17px] h-[19px] bg-[#e1e1e1] border-l border-[#a8a8a8] flex items-center justify-center"><svg width="8" height="5" viewBox="0 0 8 5" fill="none" stroke="#555"><path d="M.5.500L4 4 7.500.500" /></svg></span>
          </div>
        </div>
        <div className="mt-[35px] ml-[382px] w-[83px] h-[24px] bg-[#e1e1e1] border border-[#c4c4c4] text-center leading-[22px]">Op<span className="underline">t</span>ions &gt; &gt;</div>
      </div>
      <div className="mt-[9px] flex h-[24px] shrink-0">
        <div className={"ml-[203px] w-[83px] " + btn}>F<span className="underline">i</span>nd All</div>
        <div className={"ml-[10px] w-[83px] " + btn + " !border-2 !border-[#3b79b2] !leading-[21px]"}><span className="underline">F</span>ind Next</div>
        <div className={"ml-[20px] w-[83px] " + btn}>Close</div>
      </div>
      <div className="mt-[6px] h-[113px] shrink-0 bg-white border-t border-b border-[#a8a8a8]">
        <div className={cols + " h-[19px] leading-[20px] pl-[5px]"}>
          {["Book", "Sheet", "Name", "Cell", "Value", "Formula"].map((h, i) => (
            <div key={h} className={i < 5 ? "border-r border-[#e4e4e4]" : ""}>{h}</div>
          ))}
        </div>
        <div className="mx-[4px] bg-[#0a68c8] text-white">
          {rows.map(([c, u], i) => (
            <div key={i} className={cols + " h-[16.670px] leading-[17px] pl-[1px] " + (u ? "underline border-b border-dotted border-[#9cc4ec]" : "")}>
              <div className="tracking-[-0.4px] whitespace-nowrap">Master_sheet_original.xlsx</div><div>Sheet1</div><div /><div>{c}</div><div>Weight</div><div />
            </div>
          ))}
        </div>
      </div>
      <div className="relative flex-1 min-h-0 pl-[1px] leading-[20px]">4 cell(s) found
        <svg width="8" height="8" viewBox="0 0 8 8" className="absolute right-[1px] bottom-[1px]" fill="#bbb"><rect x="6" y="0" width="2" height="2" /><rect x="3" y="3" width="2" height="2" /><rect x="6" y="3" width="2" height="2" /><rect x="0" y="6" width="2" height="2" /><rect x="3" y="6" width="2" height="2" /><rect x="6" y="6" width="2" height="2" /></svg>
      </div>
    </div>
  );
}

export default function App() {
  return (
    <div className="relative w-[1280px] h-[720px] overflow-hidden bg-white flex flex-col font-['Roboto',sans-serif]">
      <TitleBar />
      <TabsRow />
      <Ribbon />
      <FormulaBar />
      <Grid />
      <SheetBar />
      <StatusBar />
      <Taskbar />
      <Dialog />
    </div>
  );
}
